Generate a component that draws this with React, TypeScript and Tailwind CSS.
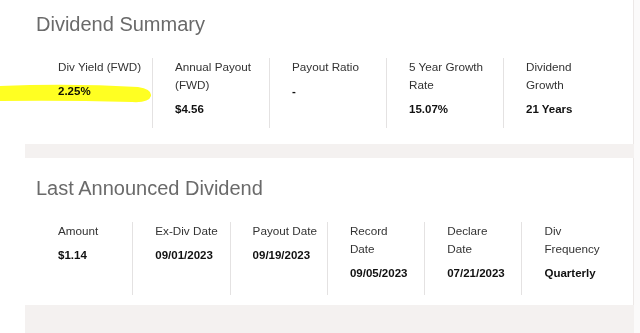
type Stat = {
    label: string[];
    value: string;
};

const summary: Stat[] = [
    { label: ["Div Yield (FWD)"], value: "2.25%" },
    { label: ["Annual Payout", "(FWD)"], value: "$4.56" },
    { label: ["Payout Ratio"], value: "-" },
    { label: ["5 Year Growth", "Rate"], value: "15.07%" },
    { label: ["Dividend", "Growth"], value: "21 Years" },
];

const lastDividend: Stat[] = [
    { label: ["Amount"], value: "$1.14" },
    { label: ["Ex-Div Date"], value: "09/01/2023" },
    { label: ["Payout Date"], value: "09/19/2023" },
    { label: ["Record", "Date"], value: "09/05/2023" },
    { label: ["Declare", "Date"], value: "07/21/2023" },
    { label: ["Div", "Frequency"], value: "Quarterly" },
];

function StatCell({ stat, width, last }: { stat: Stat; width: string; last: boolean }) {
    return (
        <div className={`${width} shrink-0 pl-[22px] ${last ? "" : "border-r border-[#e4e2e2]"}`}>
            {stat.label.map((line) => (
                <div key={line} className="text-[11.7px] leading-[18px] text-[#333]">
                    {line}
                </div>
            ))}
            <div className="mt-[6px] text-[11.5px] leading-[18px] font-bold text-[#111]">{stat.value}</div>
        </div>
    );
}

export default function App() {
    return (
        <div
            className="relative flex w-[640px] h-[333px] overflow-hidden bg-white"
            style={{ fontFamily: '"Liberation Sans", Arial, sans-serif' }}
        >
            <div className="w-[25px] shrink-0 bg-white" />

            <div className="flex flex-col gap-[14px] w-[609px] shrink-0 bg-[#f4f1f0]">
                {/* dividend summary */}
                <div className="h-[144px] bg-white pl-[11px] pt-[12px] border-r border-[#ece8e7]">
                    <h2 className="text-[20px] leading-[24px] text-[#6a6a6a]">Dividend Summary</h2>
                    <div className="flex mt-[14px] h-[78px] pt-[8px]">
                        {summary.map((s, i) => (
                            <StatCell key={i} stat={s} width="w-[117px]" last={i == summary.length - 1} />
                        ))}
                    </div>
                </div>

                {/* last announced */}
                <div className="h-[147px] bg-white pl-[11px] pt-[18px] border-r border-[#ece8e7]">
                    <h2 className="text-[20px] leading-[24px] text-[#6a6a6a]">Last Announced Dividend</h2>
                    <div className="flex mt-[16px] h-[79px] pt-[6px]">
                        {lastDividend.map((s, i) => (
                            <StatCell key={i} stat={s} width="w-[97.3px]" last={i == lastDividend.length - 1} />
                        ))}
                    </div>
                </div>
            </div>

            <div className="flex-1 bg-[#fbfafa]" />

            {/* marker highlight */}
            <svg
                className="absolute left-0 top-[80px] mix-blend-multiply pointer-events-none"
                width="156"
                height="26"
                viewBox="0 0 156 26"
            >
                <path
                    d="M0 6 Q 70 3 138 7 Q 152 9 151 16 Q 149 23 132 22 Q 60 20 0 21 Z"
                    fill="#ffff22"
                />
            </svg>
        </div>
    );
}
